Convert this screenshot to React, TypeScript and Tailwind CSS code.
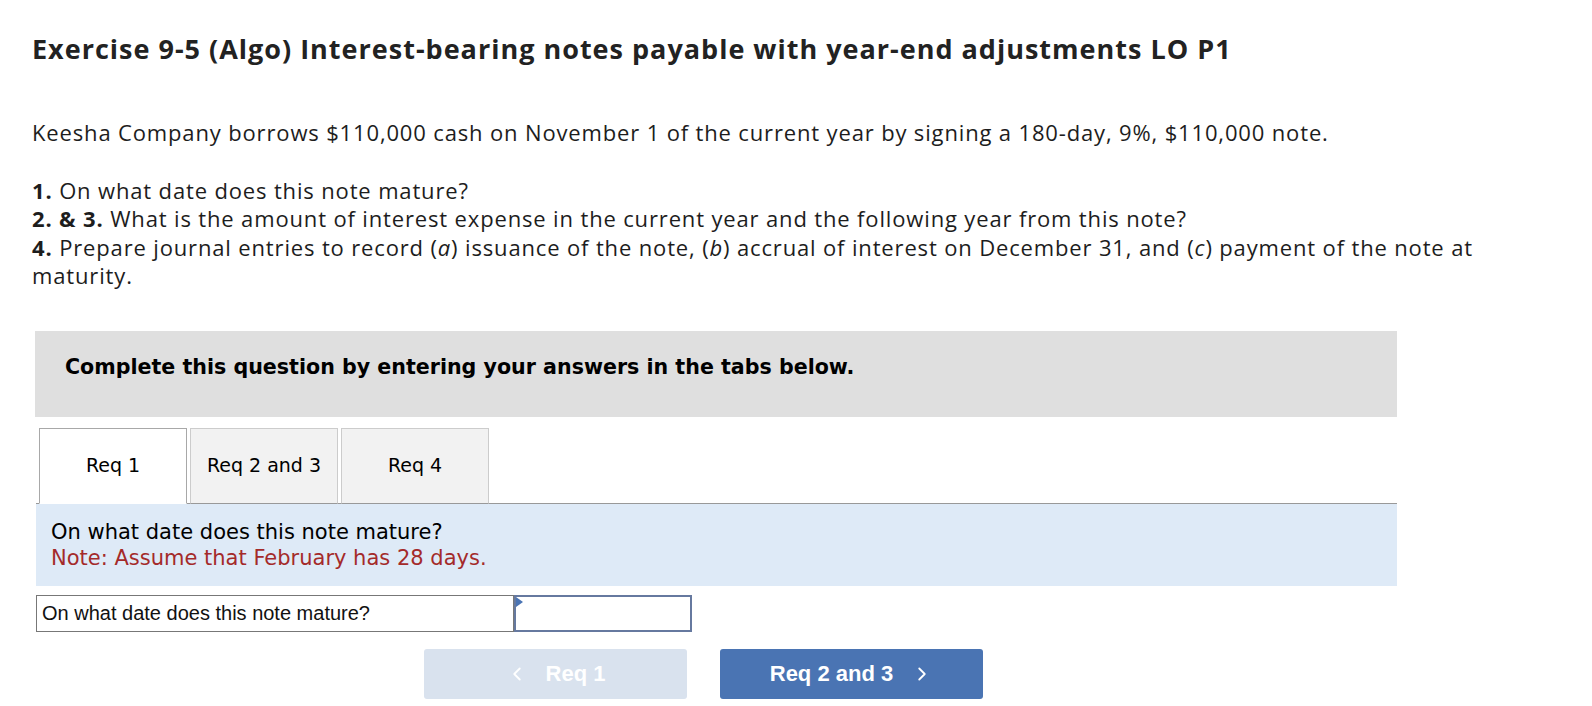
import React, { JSX } from "react";
import { ChevronLeft, ChevronRight } from "lucide-react";

const sans = "font-['Open_Sans','Lato',sans-serif]";
const verdana = "font-['DejaVu_Sans','Verdana',sans-serif]";
const arial = "font-['Liberation_Sans','Arial',sans-serif]";

interface TabProps {
  label: string;
  active?: boolean;
}

function Tab({ label, active }: TabProps) {
  return (
    <div
      className={`w-[148px] h-[76px] flex items-center justify-center text-[19px] text-black border -mb-px
        ${active ? "bg-white border-[#a8a8a8] border-b-white" : "bg-[#f2f2f2] border-[#cccccc] border-b-[#999999]"}`}
    >
      {label}
    </div>
  );
}

export default function App(): JSX.Element {
  return (
    <main className="w-[1592px] h-[706px] bg-white text-[#1d1d1d] overflow-hidden">
      <h1 className={`${sans} font-bold text-[27px] tracking-[1px] leading-[32px] pl-[32px] pt-[33px] text-[#222]`}>
        Exercise 9-5 (Algo) Interest-bearing notes payable with year-end adjustments LO P1
      </h1>

      <p className={`${sans} text-[22px] tracking-[0.85px] leading-[28px] pl-[32px] mt-[53px]`}>
        Keesha Company borrows $110,000 cash on November 1 of the current year by signing a 180-day, 9%, $110,000 note.
      </p>

      <div className={`${sans} text-[22px] tracking-[0.85px] leading-[28.4px] pl-[32px] w-[1520px] mt-[30px]`}>
        <div>
          <b>1.</b> On what date does this note mature?
        </div>
        <div>
          <b>2. &amp; 3.</b> What is the amount of interest expense in the current year and the following year from this note?
        </div>
        <div>
          <b>4.</b> Prepare journal entries to record (<i>a</i>) issuance of the note, (<i>b</i>) accrual of interest on December 31, and (<i>c</i>) payment of the note at maturity.
        </div>
      </div>

      <div className={`${verdana} ml-[35px] w-[1362px] h-[86px] mt-[41px] bg-[#dfdfdf] pl-[30px] pt-[21px] text-[20.6px] font-bold text-black`}>
        Complete this question by entering your answers in the tabs below.
      </div>

      <div className={`${verdana} ml-[36px] w-[1361px]`}>
        <div className="flex gap-[3px] pl-[3px] mt-[11px] border-b border-[#999999]">
          <Tab label="Req 1" active />
          <Tab label="Req 2 and 3" />
          <Tab label="Req 4" />
        </div>

        <div className="bg-[#deeaf7] h-[82px] pl-[15px] pt-[15px] text-[21px] leading-[26px]">
          <div className="text-black">On what date does this note mature?</div>
          <div className="text-[#a42a2a]">Note: Assume that February has 28 days.</div>
        </div>

        <div className={`${arial} flex mt-[9px] h-[37px] w-[656px]`}>
          <div className="w-[478px] border border-[#777777] flex items-center pl-[5px] text-[20px] text-[#111]">
            On what date does this note mature?
          </div>
          <div className="relative flex-1 border-2 border-[#66799f] bg-white">
            <span className="absolute left-0 top-0 w-0 h-0 border-y-[5px] border-y-transparent border-l-[7px] border-l-[#4a74b4]" />
          </div>
        </div>

        <div className={`${arial} flex gap-[33px] ml-[388px] mt-[17px]`}>
          <button className="w-[263px] h-[50px] rounded-[3px] bg-[#d9e2ee] text-white font-bold text-[22px] flex items-center justify-center gap-[18px]">
            <ChevronLeft size={22} strokeWidth={2} />
            <span>Req 1</span>
          </button>
          <button className="w-[263px] h-[50px] rounded-[3px] bg-[#4a74b3] text-white font-bold text-[22px] flex items-center justify-center gap-[18px]">
            <span>Req 2 and 3</span>
            <ChevronRight size={22} strokeWidth={2} />
          </button>
        </div>
      </div>
    </main>
  );
}
